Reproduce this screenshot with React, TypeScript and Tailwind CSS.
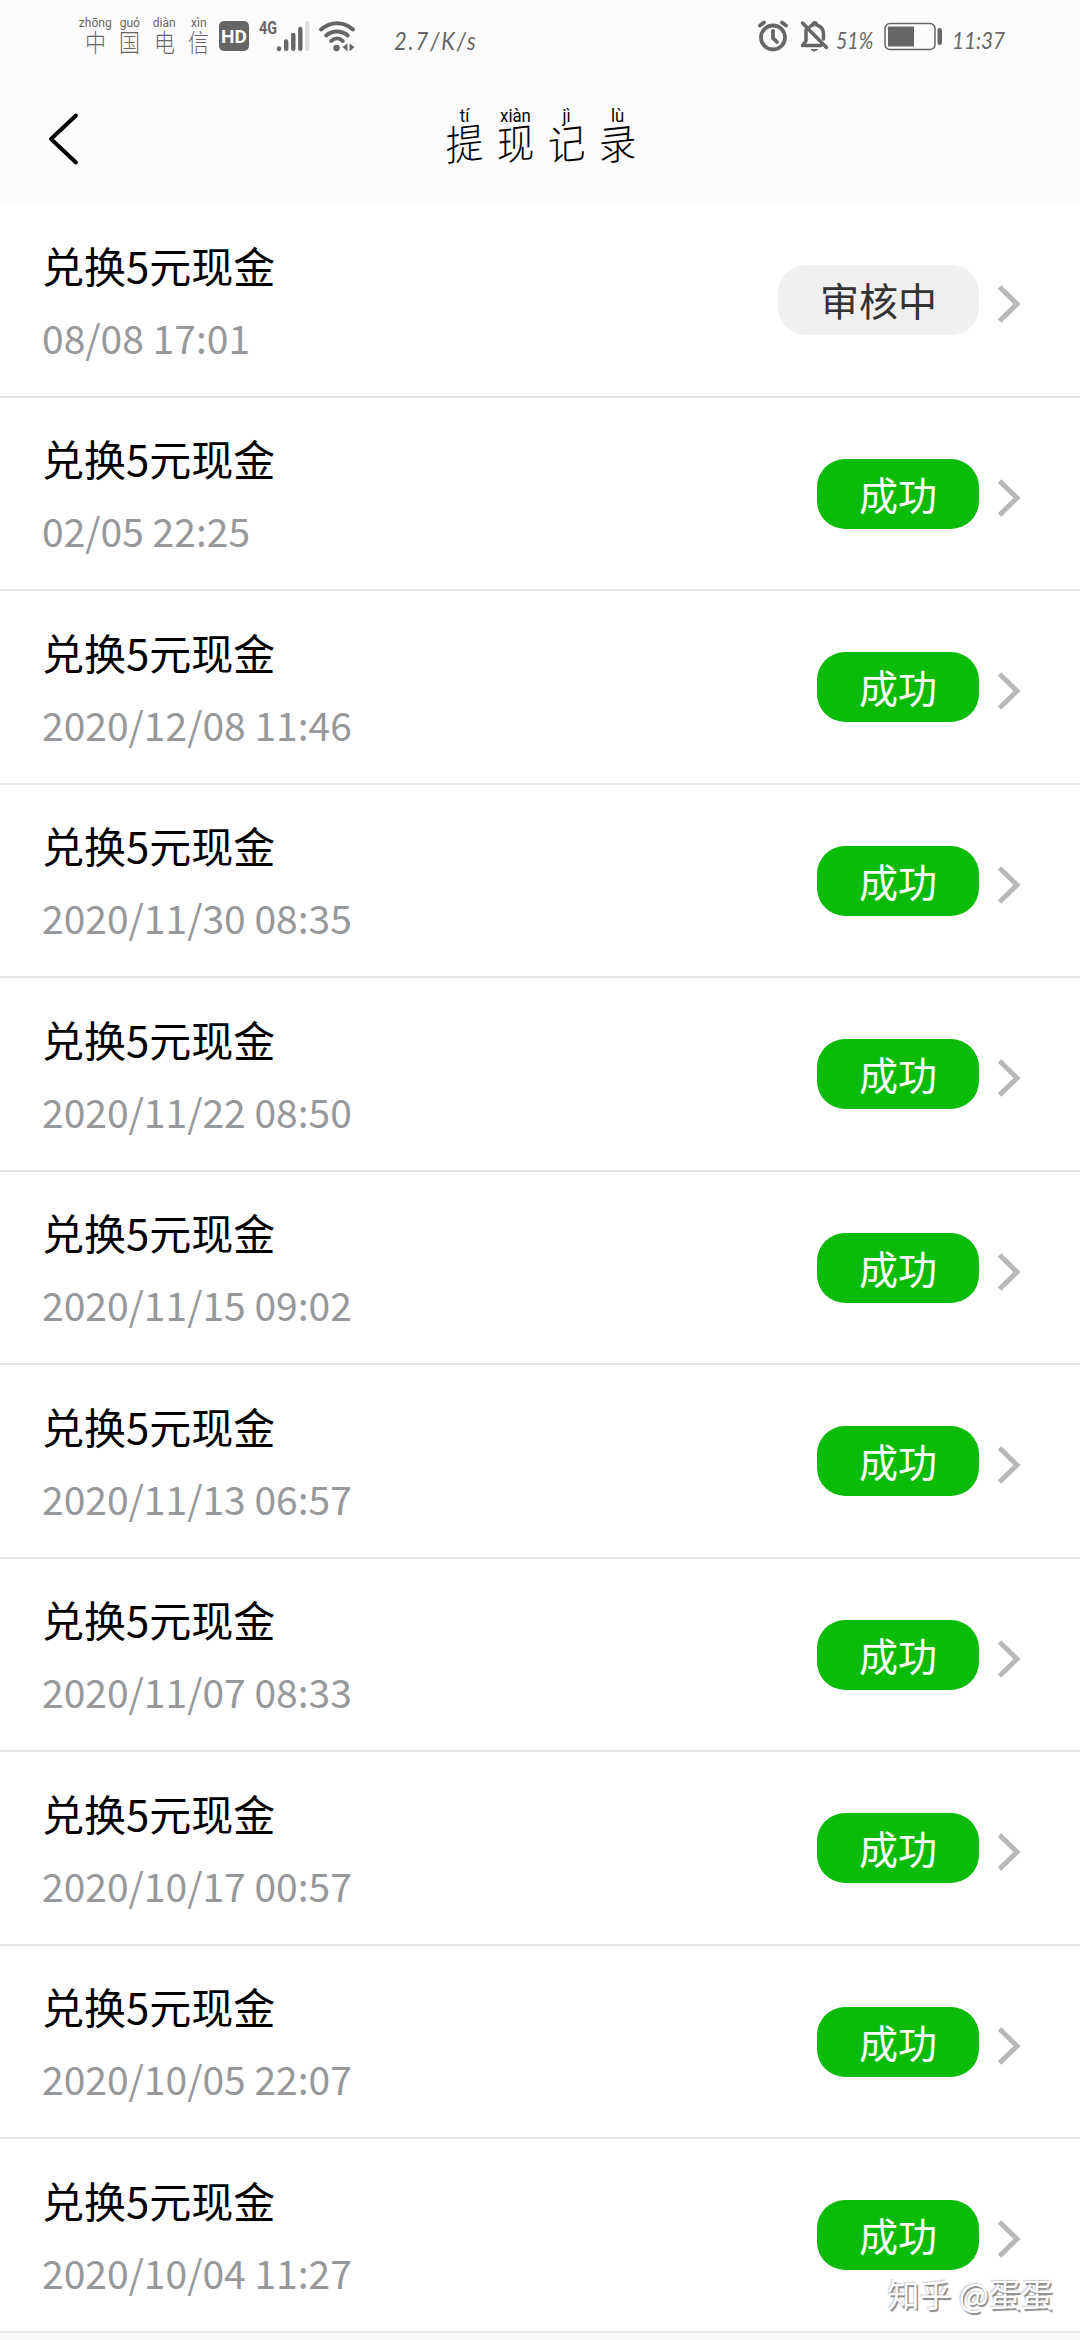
import { clsx } from 'clsx'

type Status = 'pending' | 'success'

interface WithdrawRecord {
  time: string
  status: Status
}

const records: WithdrawRecord[] = [
  { time: '08/08 17:01', status: 'pending' },
  { time: '02/05 22:25', status: 'success' },
  { time: '2020/12/08 11:46', status: 'success' },
  { time: '2020/11/30 08:35', status: 'success' },
  { time: '2020/11/22 08:50', status: 'success' },
  { time: '2020/11/15 09:02', status: 'success' },
  { time: '2020/11/13 06:57', status: 'success' },
  { time: '2020/11/07 08:33', status: 'success' },
  { time: '2020/10/17 00:57', status: 'success' },
  { time: '2020/10/05 22:07', status: 'success' },
  { time: '2020/10/04 11:27', status: 'success' },
]

const statusLabel: Record<Status, string> = {
  pending: '审核中',
  success: '成功',
}

const carrier = [
  { char: '中', pinyin: 'zhōng' },
  { char: '国', pinyin: 'guó' },
  { char: '电', pinyin: 'diàn' },
  { char: '信', pinyin: 'xìn' },
]

const title = [
  { char: '提', pinyin: 'tí' },
  { char: '现', pinyin: 'xiàn' },
  { char: '记', pinyin: 'jì' },
  { char: '录', pinyin: 'lù' },
]

function StatusBar() {
  return (
    <div className="flex h-[72px] items-start text-[#666]">
      <div className="ml-[78px] mt-[17px] flex">
        {carrier.map(({ char, pinyin }) => (
          <div key={char} className="flex w-[34.5px] flex-col items-center whitespace-nowrap">
            <span className="h-[12px] font-[Roboto] text-[12px] leading-[12px]">{pinyin}</span>
            <span className="scale-x-[.84] text-[25px] font-light leading-[25px]">{char}</span>
          </div>
        ))}
      </div>

      <div className="ml-[3px] mt-[21px] flex h-[30px] w-[30px] items-center justify-center rounded-[5px] bg-[#666] font-[Roboto] text-[19px] font-bold leading-none text-[#fcfcfc]">
        HD
      </div>

      <span className="ml-[10px] mt-[19px] w-[17px] origin-left scale-x-[.8] font-[Roboto] text-[18px] font-bold leading-[17px]">4G</span>
      <svg className="mt-[20px]" width="34" height="32" viewBox="0 0 34 32" fill="none" strokeWidth="4.4" strokeLinecap="round" stroke="currentColor">
        <path d="M3 28.500V29M10.200 21.500v7.300M17.300 15v13.800M24.300 9v19.800" />
        <path d="M31.400 3v26" stroke="#ddd" />
      </svg>

      <svg className="ml-[8px] mt-[20px]" width="40" height="32" viewBox="0 0 40 32" fill="none" stroke="currentColor" strokeWidth="4" strokeLinecap="round">
        <path d="M3 9.500C12.500 1 25.500 1 35 9.500" />
        <path d="M8.200 15.500c6-5.500 15.600-5.500 21.600 0" />
        <path d="M13.200 21c3.500-3.300 8.100-3.300 11.600 0" />
        <circle cx="18.500" cy="28" r="3.200" fill="currentColor" stroke="none" />
        <path d="M29.500 23.500v8l-5-4.500zM31.500 23.500v8l5-4.500z" fill="currentColor" stroke="none" />
      </svg>

      <span className="ml-[36px] mt-[26px] origin-left scale-x-[.88] font-[Lato] text-[25px] italic leading-[28px] tracking-[2.1px]">2.7/K/s</span>

      <div className="ml-auto mr-[76px] flex items-start">
        <svg className="mt-[20px]" width="32" height="32" viewBox="0 0 32 32" fill="none" stroke="currentColor" strokeWidth="3.800" strokeLinecap="round">
          <circle cx="16" cy="17.500" r="12" />
          <path d="M16 11v7l4 4M3 5.500 7 2.500M25 2.500l4 3" />
        </svg>
        <svg className="ml-[11px] mt-[20px]" width="29" height="32" viewBox="0 0 29 32" fill="none" stroke="currentColor" strokeWidth="3.500" strokeLinecap="round" strokeLinejoin="round">
          <path d="M2.500 3l24 24.500" />
          <path d="M6 10v11l-3.500 4.500H21" />
          <path d="M10 6.500c1-.800 2-1.200 3-1.500 0-3 3.500-3 3.500 0 4.500 1.200 7 4.500 7 9V19" />
          <path d="M11.500 29.500h6L14.500 31z" fill="currentColor" strokeWidth="1" />
        </svg>
        <span className="ml-[7px] mt-[26px] w-[40px] origin-left scale-x-[.85] whitespace-nowrap font-[Lato] text-[23px] italic leading-[28px]">51%</span>
        <svg className="ml-[8px] mt-[22px]" width="60" height="29" viewBox="0 0 60 29">
          <rect x="1" y="1.500" width="50" height="26" rx="5" fill="none" stroke="currentColor" strokeWidth="1.500" />
          <rect x="4" y="4.500" width="26" height="20" fill="currentColor" />
          <rect x="53.500" y="6" width="4.500" height="17" rx="2.200" fill="currentColor" />
        </svg>
        <span className="ml-[8px] mt-[26px] w-[52px] origin-left scale-x-[.86] whitespace-nowrap font-[Lato] text-[24px] italic leading-[28px]">11:37</span>
      </div>
    </div>
  )
}

function Header() {
  return (
    <header className="flex h-[132px] pt-9">
      <svg className="ml-[47px] mt-[4px]" width="34" height="54" viewBox="0 0 34 54" fill="none" stroke="#000" strokeWidth="4" strokeLinecap="round" strokeLinejoin="round">
        <path d="M29 3.500 4 27l25 23.500" />
      </svg>
      <h1 className="ml-[358px] flex text-black">
        {title.map(({ char, pinyin }) => (
          <div key={char} className="flex w-[51px] flex-col items-center whitespace-nowrap">
            <span className="h-[14px] scale-x-[.88] font-[Roboto] text-[19px] leading-[16px]">{pinyin}</span>
            <span className="-skew-y-6 scale-x-[.92] text-[41px] font-light leading-[38px]">{char}</span>
          </div>
        ))}
      </h1>
    </header>
  )
}

function RecordRow({ record }: { record: WithdrawRecord }) {
  return (
    <li className="flex h-[193.5px] items-center justify-between border-b-2 border-[#e5e5e5] pl-[42px] pr-[58px]">
      <div>
        <p className="text-[42px] leading-[60px] text-black">兑换5元现金</p>
        <p className="mt-[14px] text-[39px] leading-[56px] text-[#97989a]">{record.time}</p>
      </div>
      <div className="mt-px flex items-center">
        <span
          className={clsx(
            'flex h-[70px] items-center rounded-[28px] px-[42px] pb-0.5 text-[39px]',
            record.status === 'success' ? 'bg-[#0abb07] text-white' : 'bg-[#f0f0f0] text-[#333]',
          )}
        >
          {statusLabel[record.status]}
        </span>
        <svg className="ml-[17px] mt-[8px]" width="26" height="40" viewBox="0 0 26 40" fill="none" stroke="#b8b8b8" strokeWidth="5">
          <path d="M3.500 3 21 20 3.500 37" />
        </svg>
      </div>
    </li>
  )
}

export default function App() {
  return (
    <div className="relative h-[2340px] w-[1080px] overflow-hidden bg-[#f8f8f8] font-['Noto_Sans_CJK_SC',sans-serif]">
      <div className="bg-[#fcfcfc]">
        <StatusBar />
        <Header />
      </div>
      <ul className="bg-white">
        {records.map((record) => (
          <RecordRow key={record.time} record={record} />
        ))}
      </ul>
      <div className="absolute bottom-[24px] right-[27px] whitespace-nowrap text-[32px] leading-[46px] text-white [text-shadow:1.5px_1.5px_1px_#888,-1px_-1px_1px_#ccc]">
        知乎 @蛋蛋
      </div>
    </div>
  )
}
